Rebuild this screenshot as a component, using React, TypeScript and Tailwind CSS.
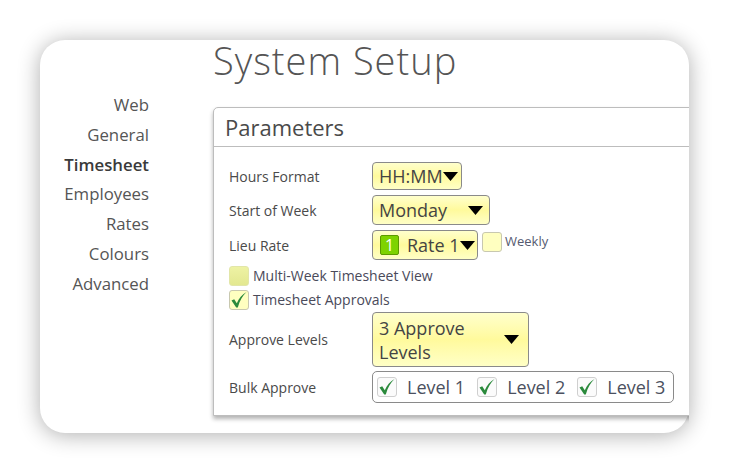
import React from 'react';

const yellow = 'bg-gradient-to-b from-[#ffffcc] via-[#fffa9c] to-[#ffffc6]';

function Arrow() {
    return (
        <svg width="15" height="9" viewBox="0 0 15 9" className="shrink-0">
            <polygon points="0,0 15,0 7.5,9" fill="#000" />
        </svg>
    );
}

function Check() {
    return (
        <svg width="18" height="18" viewBox="0 0 18 18">
            <path d="M1.5 9.5 L4.2 8.2 L6.8 12.2 C9 7.2 11.8 3.6 16.5 1 C12.6 4.6 9.8 9.4 7.8 16.5 L6.2 16.5 Z" fill="#2b8a3c" />
        </svg>
    );
}

function Box({ checked, tone }: { checked?: boolean; tone: 'yellow' | 'lime' | 'white' }) {
    const styles = {
        yellow: 'bg-[#ffffc0] border-[#c8c8b0]',
        lime: 'bg-gradient-to-b from-[#eef2a4] to-[#e3e890] border-[#e2e6a8]',
        white: 'bg-[#fbfbfb] border-[#cfcfcf]',
    }[tone];
    return (
        <div className={`flex h-5 w-5 shrink-0 items-center justify-center rounded-[3px] border ${styles}`}>
            {checked && <Check />}
        </div>
    );
}

function Row({ label, children }: { label: string; children: React.ReactNode }) {
    return (
        <div className="flex items-center">
            <div className="w-[143px] shrink-0 text-[14px] text-[#4a4a4a]">{label}</div>
            {children}
        </div>
    );
}

const nav = ['Web', 'General', 'Timesheet', 'Employees', 'Rates', 'Colours', 'Advanced'];

export default function App() {
    return (
        <div className="bg-white p-[40px]" style={{ fontFamily: '"Open Sans", sans-serif' }}>
            <div className="flex h-[393px] w-[649px] overflow-x-clip rounded-[25px] bg-white shadow-[0_2px_22px_rgba(0,0,0,0.32)]">

                {/* Sidebar */}
                <div className="w-[109px] shrink-0 pt-[50px] text-right">
                    {nav.map((n) => (
                        <div
                            key={n}
                            className={`text-[16.8px] leading-[29.8px] ${n === 'Timesheet' ? 'font-semibold text-[#3a3a3a]' : 'text-[#555]'}`}
                        >
                            {n}
                        </div>
                    ))}
                </div>

                {/* Main */}
                <div className="ml-[64px] w-[540px] shrink-0">
                    <h1 className="h-[67px] text-[38px] font-light leading-[40px] tracking-[1px] text-[#555]">
                        System Setup
                    </h1>

                    <div className="rounded-tl-[5px] border border-[#bdbdbd] bg-white shadow-[0_3px_4px_rgba(0,0,0,0.3)]">
                        <div className="flex h-[39px] items-center border-b border-[#bdbdbd] px-[11px] text-[22px] font-medium text-[#4a4a4a]">
                            Parameters
                        </div>

                        <div className="flex flex-col pb-[12px] pl-[15px] pt-[15px] text-[#444]">
                            <Row label="Hours Format">
                                <div className={`flex h-[28px] w-[90px] items-center rounded-[4px] border border-[#8a8a8a] pl-[6px] text-[18px] ${yellow}`}>
                                    <span>HH:MM</span>
                                    <Arrow />
                                </div>
                            </Row>

                            <div className="mt-[5px]">
                                <Row label="Start of Week">
                                    <div className={`flex h-[30px] w-[118px] items-center justify-between rounded-[4px] border border-[#8a8a8a] pl-[6px] pr-[6px] text-[18px] ${yellow}`}>
                                        <span>Monday</span>
                                        <Arrow />
                                    </div>
                                </Row>
                            </div>

                            <div className="mt-[5px]">
                                <Row label="Lieu Rate">
                                    <div className={`flex h-[30px] w-[106px] items-center rounded-[4px] border border-[#8a8a8a] pl-[7px] text-[18px] ${yellow}`}>
                                        <span className="mr-[8px] flex h-[20px] w-[19px] items-center justify-center rounded-[2px] border border-[#5c9a00] bg-[#7ed300] text-[16px] leading-none text-white">
                                            1
                                        </span>
                                        <span>Rate 1</span>
                                        <Arrow />
                                    </div>
                                    <div className="ml-[4px] flex items-center self-start pt-[2px]">
                                        <Box tone="yellow" />
                                        <span className="ml-[3px] text-[13px] text-[#555a70]">Weekly</span>
                                    </div>
                                </Row>
                            </div>

                            <div className="mt-[5px] flex items-center">
                                <Box tone="lime" />
                                <span className="ml-[4px] text-[14px] text-[#4a4a5a]">Multi-Week Timesheet View</span>
                            </div>
                            <div className="mt-[3px] flex items-center">
                                <Box tone="yellow" checked />
                                <span className="ml-[4px] text-[14px] text-[#4a4a5a]">Timesheet Approvals</span>
                            </div>

                            <div className="mt-[2px]">
                                <Row label="Approve Levels">
                                    <div className={`flex h-[55px] w-[157px] items-center rounded-[4px] border border-[#8a8a8a] pl-[6px] pr-[4px] text-[18px] leading-[24px] ${yellow}`}>
                                        <span className="w-[125px]">3 Approve Levels</span>
                                        <Arrow />
                                    </div>
                                </Row>
                            </div>

                            <div className="mt-[4px]">
                                <Row label="Bulk Approve">
                                    <div className="flex h-[32px] w-[302px] items-center gap-[12px] rounded-[5px] border border-[#8a8a8a] pl-[4px] text-[18px] text-[#4b5060]">
                                        {['Level 1', 'Level 2', 'Level 3'].map((l) => (
                                            <div key={l} className="flex items-center gap-[10px]">
                                                <Box tone="white" checked />
                                                <span>{l}</span>
                                            </div>
                                        ))}
                                    </div>
                                </Row>
                            </div>
                        </div>
                    </div>
                </div>
            </div>
        </div>
    );
}
